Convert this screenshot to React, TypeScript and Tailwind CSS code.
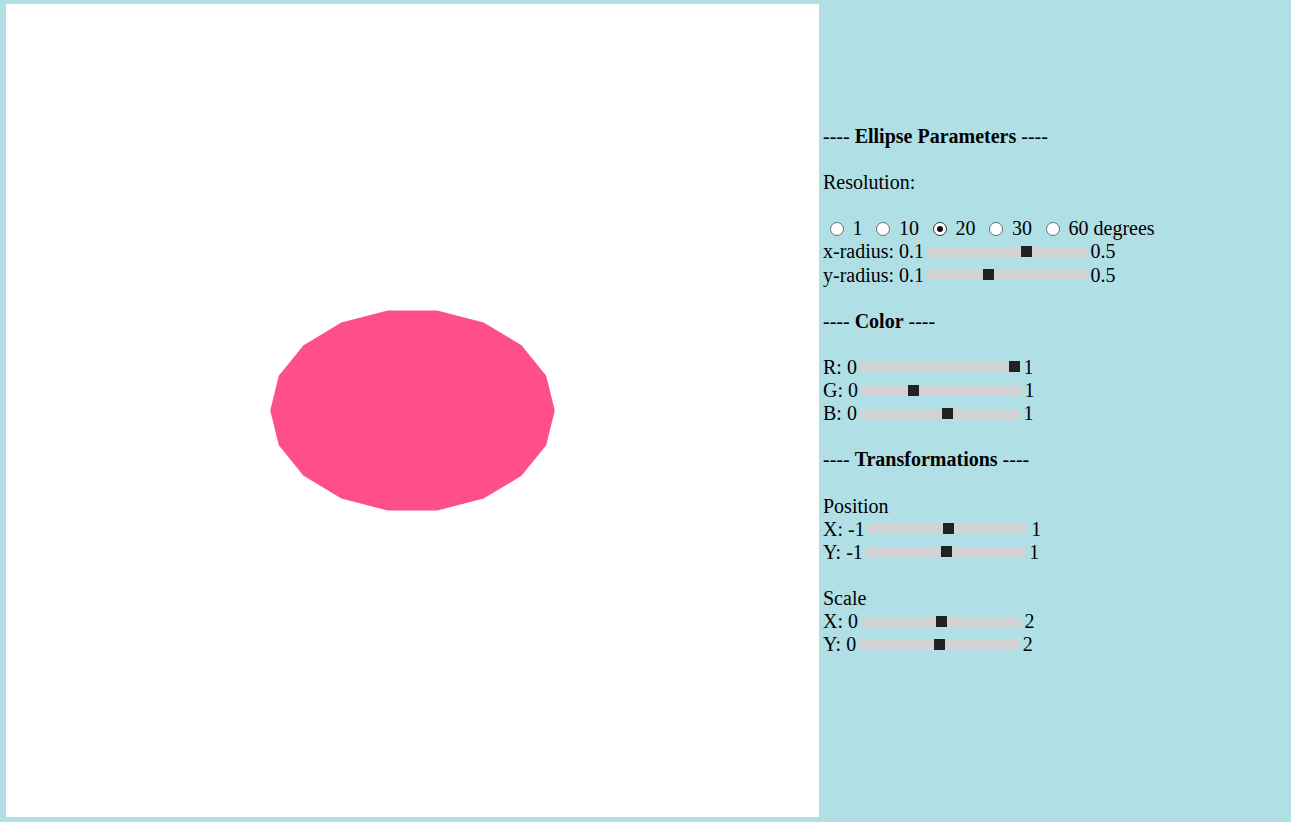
import { useRef, useState } from "react";

type SliderProps = {
  min: number;
  max: number;
  value: number;
  onChange: (v: number) => void;
};

// gray track with a square black thumb, draggable
function Slider({ min, max, value, onChange }: SliderProps) {
  const ref = useRef<HTMLDivElement>(null);
  const f = (value - min) / (max - min);

  const setFromX = (clientX: number) => {
    if (!ref.current) return;
    const r = ref.current.getBoundingClientRect();
    let t = (clientX - r.left - 5.5) / (r.width - 11);
    t = Math.min(1, Math.max(0, t));
    onChange(min + t * (max - min));
  };

  return (
    <div
      ref={ref}
      onPointerDown={(e) => {
        e.currentTarget.setPointerCapture(e.pointerId);
        setFromX(e.clientX);
      }}
      onPointerMove={(e) => {
        if (e.buttons) setFromX(e.clientX);
      }}
      className="relative ml-[3.5px] mr-[3px] h-[10px] w-[160px] shrink-0 cursor-pointer bg-[#d3d3d3]"
    >
      <div
        className="absolute bottom-0 h-[11px] w-[11px] bg-[#222]"
        style={{ left: f * 149 }}
      />
    </div>
  );
}

function Line({ children }: { children: React.ReactNode }) {
  return <div className="flex h-[23.1px] items-center whitespace-pre">{children}</div>;
}

function Gap() {
  return <div className="h-[23.1px]" />;
}

function Heading({ title }: { title: string }) {
  return (
    <div className="h-[23.1px] leading-[23.1px] whitespace-pre">
      {"---- "}
      <b className="font-bold">{title}</b>
      {" ----"}
    </div>
  );
}

const RESOLUTIONS = [1, 10, 20, 30, 60];

export default function App() {
  const [res, setRes] = useState(20);
  const [rx, setRx] = useState(0.35);
  const [ry, setRy] = useState(0.25);
  const [r, setR] = useState(1);
  const [g, setG] = useState(0.31);
  const [b, setB] = useState(0.545);
  const [px, setPx] = useState(0);
  const [py, setPy] = useState(0);
  const [sx, setSx] = useState(1);
  const [sy, setSy] = useState(1);

  const pts: string[] = [];
  for (let a = 0; a < 360; a += res) {
    const t = (a * Math.PI) / 180;
    const x = px + sx * rx * Math.cos(t);
    const y = py + sy * ry * Math.sin(t);
    pts.push(`${x.toFixed(4)},${(-y).toFixed(4)}`);
  }
  const fill = `rgb(${Math.round(r * 255)}, ${Math.round(g * 255)}, ${Math.round(b * 255)})`;

  return (
    <div className="flex min-h-screen items-start bg-[#b0e0e6] pl-[6px] pt-[4px] font-['Liberation_Serif','Times_New_Roman',serif] text-[20px] text-black">
      <div className="h-[813px] w-[813px] shrink-0 bg-white">
        <svg viewBox="-1 -1 2 2" className="h-full w-full">
          <polygon points={pts.join(" ")} fill={fill} />
        </svg>
      </div>

      <div className="ml-[4px] pt-[121px] leading-[23.1px]">
        <Heading title="Ellipse Parameters" />
        <Gap />
        <Line>Resolution:</Line>
        <Gap />
        <div className="flex h-[23.1px] items-center pl-[6.5px]">
          {RESOLUTIONS.map((v, i) => (
            <button
              key={v}
              type="button"
              onClick={() => setRes(v)}
              className={`flex items-center ${i > 0 ? "ml-[13.5px]" : ""}`}
            >
              <span
                className={`flex h-[14px] w-[14px] items-center justify-center rounded-full border bg-white ${
                  res === v ? "border-[#333]" : "border-[#6b6b6b]"
                }`}
              >
                {res === v && <span className="h-[6px] w-[6px] rounded-full bg-[#111]" />}
              </span>
              <span className="ml-[9px] whitespace-pre">{v === 60 ? "60 degrees" : String(v)}</span>
            </button>
          ))}
        </div>
        <Line>
          x-radius: 0.1
          <Slider min={0.1} max={0.5} value={rx} onChange={setRx} />
          0.5
        </Line>
        <Line>
          y-radius: 0.1
          <Slider min={0.1} max={0.5} value={ry} onChange={setRy} />
          0.5
        </Line>
        <Gap />
        <Heading title="Color" />
        <Gap />
        <Line>
          R: 0
          <Slider min={0} max={1} value={r} onChange={setR} />1
        </Line>
        <Line>
          G: 0
          <Slider min={0} max={1} value={g} onChange={setG} />1
        </Line>
        <Line>
          B: 0
          <Slider min={0} max={1} value={b} onChange={setB} />1
        </Line>
        <Gap />
        <Heading title="Transformations" />
        <Gap />
        <Line>Position</Line>
        <Line>
          X: -1
          <Slider min={-1} max={1} value={px} onChange={setPx} />1
        </Line>
        <Line>
          Y: -1
          <Slider min={-1} max={1} value={py} onChange={setPy} />1
        </Line>
        <Gap />
        <Line>Scale</Line>
        <Line>
          X: 0
          <Slider min={0} max={2} value={sx} onChange={setSx} />2
        </Line>
        <Line>
          Y: 0
          <Slider min={0} max={2} value={sy} onChange={setSy} />2
        </Line>
      </div>
    </div>
  );
}
